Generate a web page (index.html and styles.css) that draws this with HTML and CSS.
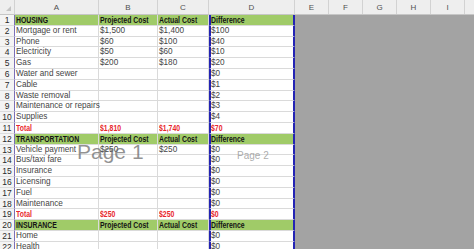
FILE: index.html
```html
<!DOCTYPE html>
<html>
<head>
<meta charset="utf-8">
<link rel="stylesheet" href="styles.css">
</head>
<body>
<div class="sheet">
  <div class="colhead">
    <div class="ch corner"><span class="tri"></span></div>
    <div class="ch wa">A</div>
    <div class="ch wb">B</div>
    <div class="ch wc">C</div>
    <div class="ch wd">D</div>
    <div class="ch we">E</div>
    <div class="ch we">F</div>
    <div class="ch we">G</div>
    <div class="ch we">H</div>
    <div class="ch we">I</div>
    <div class="ch wj"></div>
  </div>
  <div class="body">
    <div class="grid">
      <div class="rn">1</div><div class="c hd"><span>HOUSING</span></div><div class="c hd"><span>Projected Cost</span></div><div class="c hd"><span>Actual Cost</span></div><div class="c hd d"><span>Difference</span></div>
      <div class="rn">2</div><div class="c">Mortgage or rent</div><div class="c">$1,500</div><div class="c">$1,400</div><div class="c d">$100</div>
      <div class="rn">3</div><div class="c">Phone</div><div class="c">$60</div><div class="c">$100</div><div class="c d">$40</div>
      <div class="rn">4</div><div class="c">Electricity</div><div class="c">$50</div><div class="c">$60</div><div class="c d">$10</div>
      <div class="rn">5</div><div class="c">Gas</div><div class="c">$200</div><div class="c">$180</div><div class="c d">$20</div>
      <div class="rn">6</div><div class="c">Water and sewer</div><div class="c"></div><div class="c"></div><div class="c d">$0</div>
      <div class="rn">7</div><div class="c">Cable</div><div class="c"></div><div class="c"></div><div class="c d">$1</div>
      <div class="rn">8</div><div class="c">Waste removal</div><div class="c"></div><div class="c"></div><div class="c d">$2</div>
      <div class="rn">9</div><div class="c">Maintenance or repairs</div><div class="c"></div><div class="c"></div><div class="c d">$3</div>
      <div class="rn">10</div><div class="c">Supplies</div><div class="c"></div><div class="c"></div><div class="c d">$4</div>
      <div class="rn">11</div><div class="c tot"><span>Total</span></div><div class="c tot"><span>$1,810</span></div><div class="c tot"><span>$1,740</span></div><div class="c d tot"><span>$70</span></div>
      <div class="rn">12</div><div class="c hd"><span>TRANSPORTATION</span></div><div class="c hd"><span>Projected Cost</span></div><div class="c hd"><span>Actual Cost</span></div><div class="c hd d"><span>Difference</span></div>
      <div class="rn">13</div><div class="c">Vehicle payment</div><div class="c">$250</div><div class="c">$250</div><div class="c d">$0</div>
      <div class="rn">14</div><div class="c">Bus/taxi fare</div><div class="c"></div><div class="c"></div><div class="c d">$0</div>
      <div class="rn">15</div><div class="c">Insurance</div><div class="c"></div><div class="c"></div><div class="c d">$0</div>
      <div class="rn">16</div><div class="c">Licensing</div><div class="c"></div><div class="c"></div><div class="c d">$0</div>
      <div class="rn">17</div><div class="c">Fuel</div><div class="c"></div><div class="c"></div><div class="c d">$0</div>
      <div class="rn">18</div><div class="c">Maintenance</div><div class="c"></div><div class="c"></div><div class="c d">$0</div>
      <div class="rn">19</div><div class="c tot"><span>Total</span></div><div class="c tot"><span>$250</span></div><div class="c tot"><span>$250</span></div><div class="c d tot"><span>$0</span></div>
      <div class="rn">20</div><div class="c hd"><span>INSURANCE</span></div><div class="c hd"><span>Projected Cost</span></div><div class="c hd"><span>Actual Cost</span></div><div class="c hd d"><span>Difference</span></div>
      <div class="rn">21</div><div class="c">Home</div><div class="c"></div><div class="c"></div><div class="c d">$0</div>
      <div class="rn">22</div><div class="c">Health</div><div class="c"></div><div class="c"></div><div class="c d">$0</div>
    </div>
    <div class="grey"></div>
  </div>
  <div class="wm wm1">Page 1</div>
  <div class="wm wm2">Page 2</div>
</div>
</body>
</html>
```
FILE: styles.css
```css
html, body {
  margin: 0;
  padding: 0;
  background: #a3a3a3;
}
.sheet {
  position: relative;
  width: 474px;
  height: 249px;
  overflow: hidden;
  font-family: "Liberation Sans", Arial, sans-serif;
}
.colhead {
  display: flex;
  height: 15px;
  background: #eeeeee;
  border-bottom: 1px solid #c6c6c6;
  box-sizing: border-box;
}
.ch {
  flex: none;
  box-sizing: border-box;
  border-right: 1px solid #d2d2d2;
  font-size: 8px;
  line-height: 15px;
  color: #505050;
  text-align: center;
}
.corner { width: 15px; position: relative; }
.tri {
  position: absolute;
  right: 3px;
  bottom: 3px;
  width: 0;
  height: 0;
  border-left: 5px solid transparent;
  border-bottom: 5px solid #c4c4c4;
}
.wa { width: 84px; }
.wb { width: 59px; }
.wc { width: 51px; }
.wd { width: 86px; }
.we { width: 34px; }
.wj { flex: 1; border-right: none; }
.body {
  display: flex;
}
.grid {
  display: grid;
  grid-template-columns: 15px 84px 59px 51px 86px;
  grid-auto-rows: 10.8px;
  background: #ffffff;
}
.grey {
  flex: 1;
  background: #a3a3a3;
}
.rn {
  box-sizing: border-box;
  background: #f4f4f4;
  border-right: 1px solid #7c6fb6;
  border-bottom: 1px solid #dcdcdc;
  font-size: 8.5px;
  line-height: 10.5px;
  color: #2a2a2a;
  text-align: center;
}
.c {
  box-sizing: border-box;
  border-right: 1px solid #dadada;
  border-bottom: 1px solid #dadada;
  padding-left: 1px;
  font-size: 8.2px;
  line-height: 10.5px;
  white-space: nowrap;
  color: #454545;
}
.d {
  border-left: 2px solid #2424b4;
  border-right: 2px solid #2424b4;
  padding-left: 0;
}
.hd {
  background: #a0cb68;
  font-weight: bold;
  font-size: 8.6px;
  color: #141414;
}
.tot {
  font-weight: bold;
  font-size: 8.6px;
  color: #e8262c;
}
.hd span, .tot span {
  display: inline-block;
  transform: scaleX(0.8);
  transform-origin: 0 50%;
}
.wm {
  position: absolute;
  font-family: "Liberation Sans", Arial, sans-serif;
  line-height: 1;
  white-space: nowrap;
}
.wm1 {
  left: 77px;
  top: 141px;
  font-size: 21px;
  color: rgba(110, 110, 110, 0.75);
}
.wm2 {
  left: 237px;
  top: 151px;
  font-size: 10px;
  color: rgba(150, 150, 150, 0.8);
}
```
